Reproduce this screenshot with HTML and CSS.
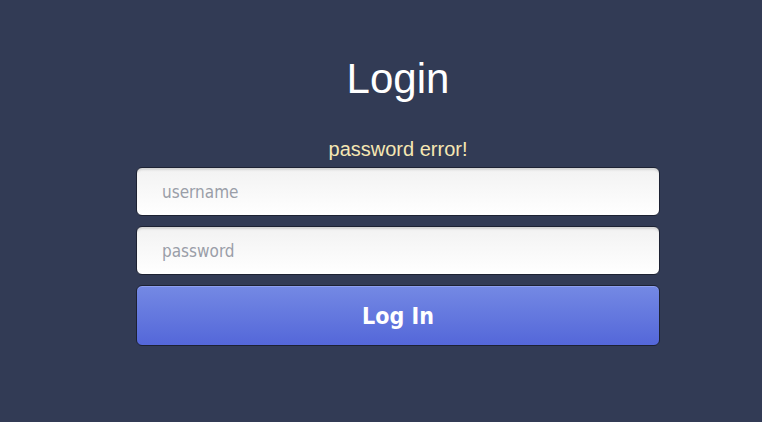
FILE: index.html
```html
<!DOCTYPE html>
<html>
<head>
<meta charset="utf-8">
<link rel="stylesheet" href="styles.css">
</head>
<body>
<div class="page">
  <form class="login">
    <h1 class="title">Login</h1>
    <p class="error">password error!</p>
    <input class="field" type="text" placeholder="username">
    <input class="field" type="password" placeholder="password">
    <button class="btn" type="button">Log In</button>
  </form>
</div>
</body>
</html>
```
FILE: styles.css
```css
html, body {
  margin: 0;
  padding: 0;
  background: #323b55;
  height: 100%;
}
.page {
  display: flex;
  justify-content: center;
  padding-left: 34px;
}
.login {
  width: 524px;
  display: flex;
  flex-direction: column;
  align-items: stretch;
  padding-top: 55px;
}
.title {
  margin: 0;
  font-family: "Liberation Sans", Arial, sans-serif;
  font-weight: normal;
  font-size: 42px;
  line-height: 48px;
  color: #ffffff;
  text-align: center;
}
.error {
  margin: 35px 0 0 0;
  font-family: "Liberation Sans", Arial, sans-serif;
  font-size: 20px;
  line-height: 22px;
  color: #f6e7b3;
  text-align: center;
}
.field {
  box-sizing: border-box;
  height: 49px;
  margin-top: 10px;
  border: 1px solid #1d2233;
  border-radius: 6px;
  background: linear-gradient(#f2f2f2, #ffffff);
  box-shadow: inset 0 3px 2px -1px #d4d4d4;
  padding: 0 25px;
  font-family: "DejaVu Sans Condensed", "DejaVu Sans", Verdana, sans-serif;
  font-size: 17px;
  color: #333;
  outline: none;
}
.error + .field { margin-top: 7px; }
.field::placeholder {
  color: #9a9ea8;
}
.btn {
  box-sizing: border-box;
  height: 61px;
  margin-top: 10px;
  border: 1px solid #1d2233;
  border-radius: 6px;
  background: linear-gradient(#7489e4, #5467d9);
  box-shadow: inset 0 1px 0 #8d9ff0;
  font-family: "DejaVu Sans Condensed", "DejaVu Sans", Verdana, sans-serif;
  font-weight: bold;
  font-size: 23px;
  color: #ffffff;
  padding: 0;
}
```
